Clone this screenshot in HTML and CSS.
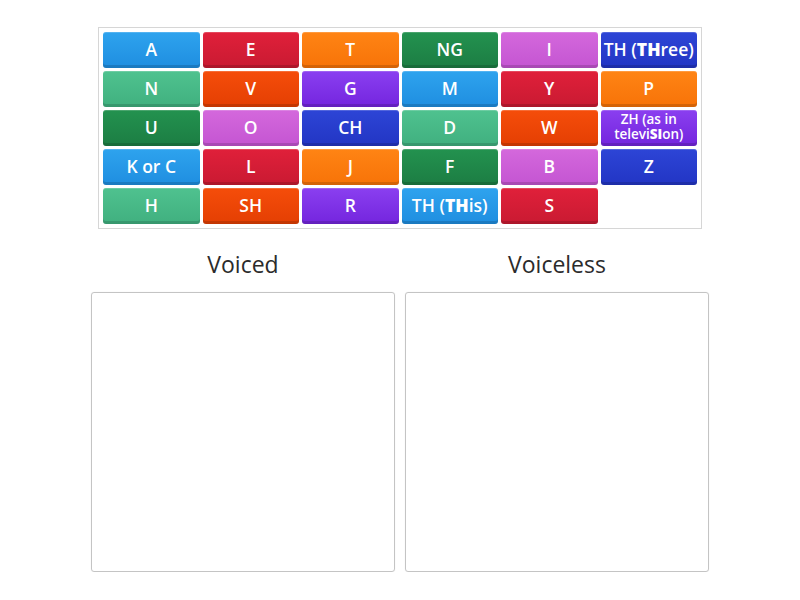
FILE: index.html
```html
<!DOCTYPE html>
<html>
<head>
<meta charset="utf-8">
<link rel="stylesheet" href="styles.css">
</head>
<body>
<div class="page">
  <div class="bank">
    <div class="tile c-blue"><span>A</span></div>
    <div class="tile c-red"><span>E</span></div>
    <div class="tile c-orange"><span>T</span></div>
    <div class="tile c-dgreen"><span>NG</span></div>
    <div class="tile c-pink"><span>I</span></div>
    <div class="tile c-navy"><span>TH (<b>TH</b>ree)</span></div>

    <div class="tile c-green"><span>N</span></div>
    <div class="tile c-vermil"><span>V</span></div>
    <div class="tile c-purple"><span>G</span></div>
    <div class="tile c-blue"><span>M</span></div>
    <div class="tile c-red"><span>Y</span></div>
    <div class="tile c-orange"><span>P</span></div>

    <div class="tile c-dgreen"><span>U</span></div>
    <div class="tile c-pink"><span>O</span></div>
    <div class="tile c-navy"><span>CH</span></div>
    <div class="tile c-green"><span>D</span></div>
    <div class="tile c-vermil"><span>W</span></div>
    <div class="tile c-purple small"><span>ZH (as in<br>televi<b>SI</b>on)</span></div>

    <div class="tile c-blue"><span>K or C</span></div>
    <div class="tile c-red"><span>L</span></div>
    <div class="tile c-orange"><span>J</span></div>
    <div class="tile c-dgreen"><span>F</span></div>
    <div class="tile c-pink"><span>B</span></div>
    <div class="tile c-navy"><span>Z</span></div>

    <div class="tile c-green"><span>H</span></div>
    <div class="tile c-vermil"><span>SH</span></div>
    <div class="tile c-purple"><span>R</span></div>
    <div class="tile c-blue"><span>TH (<b>TH</b>is)</span></div>
    <div class="tile c-red"><span>S</span></div>
  </div>

  <div class="groups">
    <div class="group">
      <div class="group-title">Voiced</div>
      <div class="drop"></div>
    </div>
    <div class="group">
      <div class="group-title">Voiceless</div>
      <div class="drop"></div>
    </div>
  </div>
</div>
</body>
</html>
```

FILE: styles.css
```css
html, body {
  margin: 0;
  padding: 0;
  background: #ffffff;
}

body {
  font-family: "Open Sans", "Noto Sans", "Liberation Sans", sans-serif;
  color: #333333;
}

.page {
  width: 800px;
  padding-top: 27px;
}

.bank {
  width: 594px;
  margin: 0 auto;
  padding: 4px;
  border: 1px solid #d6d6d6;
  display: grid;
  grid-template-columns: repeat(6, 1fr);
  grid-auto-rows: 36px;
  gap: 3px 3px;
}

.tile {
  display: flex;
  align-items: center;
  justify-content: center;
  text-align: center;
  color: #ffffff;
  font-weight: 600;
  font-size: 17.5px;
  line-height: 20px;
  padding-bottom: 2px;
  box-sizing: border-box;
  border-radius: 3px;
  box-shadow: inset 0 -3px 0 rgba(0, 0, 0, 0.14), inset 0 1px 0 rgba(255, 255, 255, 0.18);
  white-space: nowrap;
}

.tile b {
  font-weight: 800;
}

.tile.small {
  font-size: 13.5px;
  line-height: 15px;
  font-weight: 600;
}

.tile.small b {
  font-weight: 800;
}

.c-blue   { background: linear-gradient(#2ea3ee, #1f8ee0); }
.c-red    { background: linear-gradient(#e0203a, #c91a32); }
.c-orange { background: linear-gradient(#ff8414, #f77308); }
.c-dgreen { background: linear-gradient(#23924f, #1c7d43); }
.c-pink   { background: linear-gradient(#d468dc, #c455d2); }
.c-navy   { background: linear-gradient(#2d45d6, #2235c4); }
.c-green  { background: linear-gradient(#4fc28f, #40b07f); }
.c-vermil { background: linear-gradient(#f54d0a, #e43f03); }
.c-purple { background: linear-gradient(#8a3ff0, #7425de); }

.groups {
  width: 618px;
  margin: 20px auto 0;
  display: flex;
  gap: 10px;
}

.group {
  flex: 1;
  display: flex;
  flex-direction: column;
}

.group-title {
  font-size: 23px;
  line-height: 31px;
  text-align: center;
  color: #2b2b2b;
  margin-bottom: 12px;
}

.drop {
  height: 278px;
  border: 1px solid #c4c4c4;
  border-radius: 3px;
  box-shadow: 0 0 1px rgba(0, 0, 0, 0.12);
}
```
